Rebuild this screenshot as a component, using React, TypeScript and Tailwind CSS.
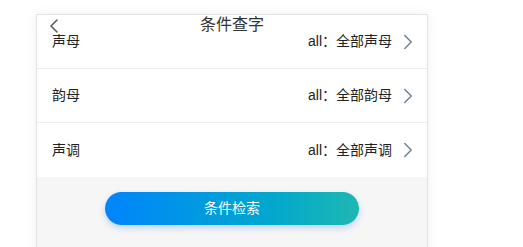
import { ChevronLeft, ChevronRight } from 'lucide-react'

const rows = [
  { label: '声母', value: 'all：全部声母' },
  { label: '韵母', value: 'all：全部韵母' },
  { label: '声调', value: 'all：全部声调' },
]

export default function App() {
  return (
    <div
      className="h-screen overflow-hidden bg-white pt-[14px] pl-[36px]"
      style={{ fontFamily: '"Liberation Sans", "Noto Sans CJK SC", sans-serif' }}
    >
      <div className="relative w-[392px] h-[260px] border border-[#e3e3e3] bg-[#f6f6f6] shadow-[0_0_12px_rgba(0,0,0,0.06)]">
        {/* 列表 */}
        <div className="bg-white">
          {rows.map((row, i) => (
            <div
              key={row.label}
              className={`flex items-center justify-between h-[54px] pl-[15px] pr-[6px] ${
                i < rows.length - 1 ? 'border-b border-[#ececec]' : ''
              }`}
            >
              <span className="text-[14px] text-[#222]">{row.label}</span>
              <div className="flex items-center gap-[3px]">
                <span className="text-[14px] text-[#222]">{row.value}</span>
                <ChevronRight size={26} strokeWidth={1.4} className="text-[#6f8497]" />
              </div>
            </div>
          ))}
        </div>

        {/* 顶部标题，覆盖在列表上 */}
        <div className="absolute top-0 left-0 right-0 flex items-center justify-center h-[20px]">
          <ChevronLeft size={24} strokeWidth={1.5} className="absolute left-[5px] top-[-1px] text-[#555]" />
          <span className="text-[16px] text-[#333] leading-none">条件查字</span>
        </div>

        {/* 检索按钮 */}
        <div className="flex justify-center pt-[15px]">
          <button className="w-[254px] h-[33px] rounded-full bg-gradient-to-r from-[#0484fb] to-[#1db7b2] text-white text-[14px] shadow-[0_3px_6px_rgba(30,110,220,0.25)]">
            条件检索
          </button>
        </div>
      </div>
    </div>
  )
}
